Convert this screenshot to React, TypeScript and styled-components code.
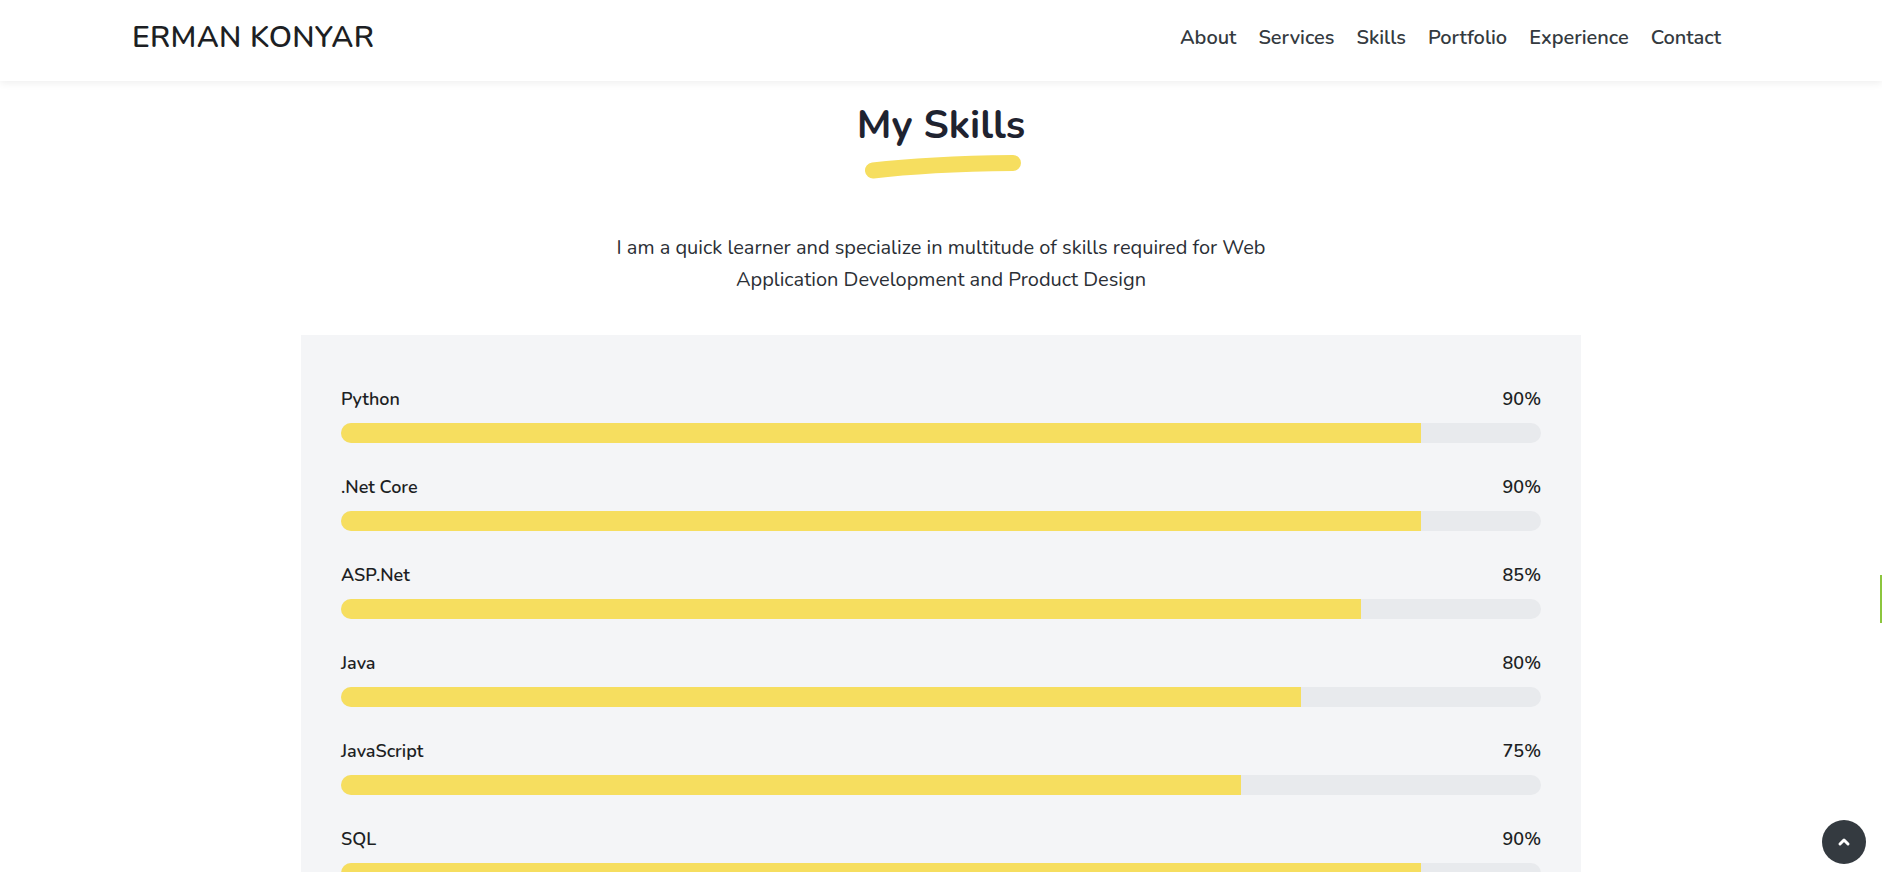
import * as React from 'react'
import styled, { createGlobalStyle } from 'styled-components'

const GlobalStyle = createGlobalStyle`
  html, body {
    margin: 0;
    padding: 0;
    background: #fff;
    font-family: 'Nunito', 'Lato', sans-serif;
    color: #212529;
  }
  * {
    box-sizing: border-box;
  }
`

const Header = styled.header`
  height: 81px;
  display: flex;
  align-items: center;
  justify-content: space-between;
  padding: 0 150px 6px 132px;
  background: #fff;
  box-shadow: 0 2px 8px rgba(0, 0, 0, 0.07);
  position: relative;
  z-index: 2;
`

const Brand = styled.div`
  font-size: 30px;
  font-weight: 600;
  letter-spacing: 0.3px;
  color: #1d1f24;
`

const Nav = styled.nav`
  display: flex;
`

const NavLink = styled.a`
  padding: 0 11px;
  font-size: 20px;
  font-weight: 600;
  color: #343a40;
  text-decoration: none;
`

const Section = styled.section`
  display: flex;
  flex-direction: column;
  align-items: center;
  padding-top: 20px;
`

const Title = styled.h2`
  margin: 0;
  font-size: 40px;
  font-weight: 700;
  line-height: 1.2;
  color: #1f2330;
`

const Brush = styled.svg`
  display: block;
  width: 156px;
  height: 24px;
  margin: 6px 0 0 4px;
`

const Lead = styled.p`
  margin: 53px 0 0;
  max-width: 680px;
  text-align: center;
  font-size: 20px;
  font-weight: 400;
  line-height: 32px;
  color: #2b2f36;
`

const Panel = styled.div`
  width: 1280px;
  margin-top: 39px;
  padding: 51px 40px 60px;
  background: #f4f5f7;
  display: flex;
  flex-direction: column;
  gap: 31px;
`

const Skill = styled.div`
  display: flex;
  flex-direction: column;
  gap: 10px;
`

const SkillHead = styled.div`
  display: flex;
  justify-content: space-between;
  font-size: 18px;
  font-weight: 600;
  line-height: 27px;
  color: #1d1f24;
`

const Track = styled.div`
  height: 20px;
  border-radius: 10px;
  background: #e8eaed;
  overflow: hidden;
`

const Fill = styled.div`
  height: 100%;
  background: #f6de5f;
`

const ScrollTop = styled.button`
  position: fixed;
  right: 16px;
  bottom: 8px;
  width: 44px;
  height: 44px;
  border: none;
  border-radius: 50%;
  background: #343a40;
  display: flex;
  align-items: center;
  justify-content: center;
  padding: 0;
`

const EdgeTab = styled.div`
  position: fixed;
  right: 0;
  top: 575px;
  width: 2px;
  height: 48px;
  background: #8cc63e;
`

const skills = [
  { name: 'Python', value: 90 },
  { name: '.Net Core', value: 90 },
  { name: 'ASP.Net', value: 85 },
  { name: 'Java', value: 80 },
  { name: 'JavaScript', value: 75 },
  { name: 'SQL', value: 90 },
]

const links = ['About', 'Services', 'Skills', 'Portfolio', 'Experience', 'Contact']

export default function App() {
  return (
    <>
      <GlobalStyle />
      <Header>
        <Brand>ERMAN KONYAR</Brand>
        <Nav>
          {links.map(l => (
            <NavLink key={l} href={`#${l.toLowerCase()}`}>{l}</NavLink>
          ))}
        </Nav>
      </Header>
      <Section>
        <Title>My Skills</Title>
        <Brush viewBox="0 0 156 24">
          <path d="M8 15.5 Q 62 9 148 8" stroke="#f6de5f" strokeWidth="16" strokeLinecap="round" fill="none" />
        </Brush>
        <Lead>
          I am a quick learner and specialize in multitude of skills required for Web Application Development and Product Design
        </Lead>
        <Panel>
          {skills.map(s => (
            <Skill key={s.name}>
              <SkillHead>
                <span>{s.name}</span>
                <span>{s.value}%</span>
              </SkillHead>
              <Track>
                <Fill style={{ width: `${s.value}%` }} />
              </Track>
            </Skill>
          ))}
        </Panel>
      </Section>
      <EdgeTab />
      <ScrollTop aria-label="Back to top">
        <svg width="14" height="10" viewBox="0 0 14 10">
          <path d="M3 7 L7 3 L11 7" stroke="#fff" strokeWidth="3" fill="none" strokeLinecap="round" strokeLinejoin="round" />
        </svg>
      </ScrollTop>
    </>
  )
}
